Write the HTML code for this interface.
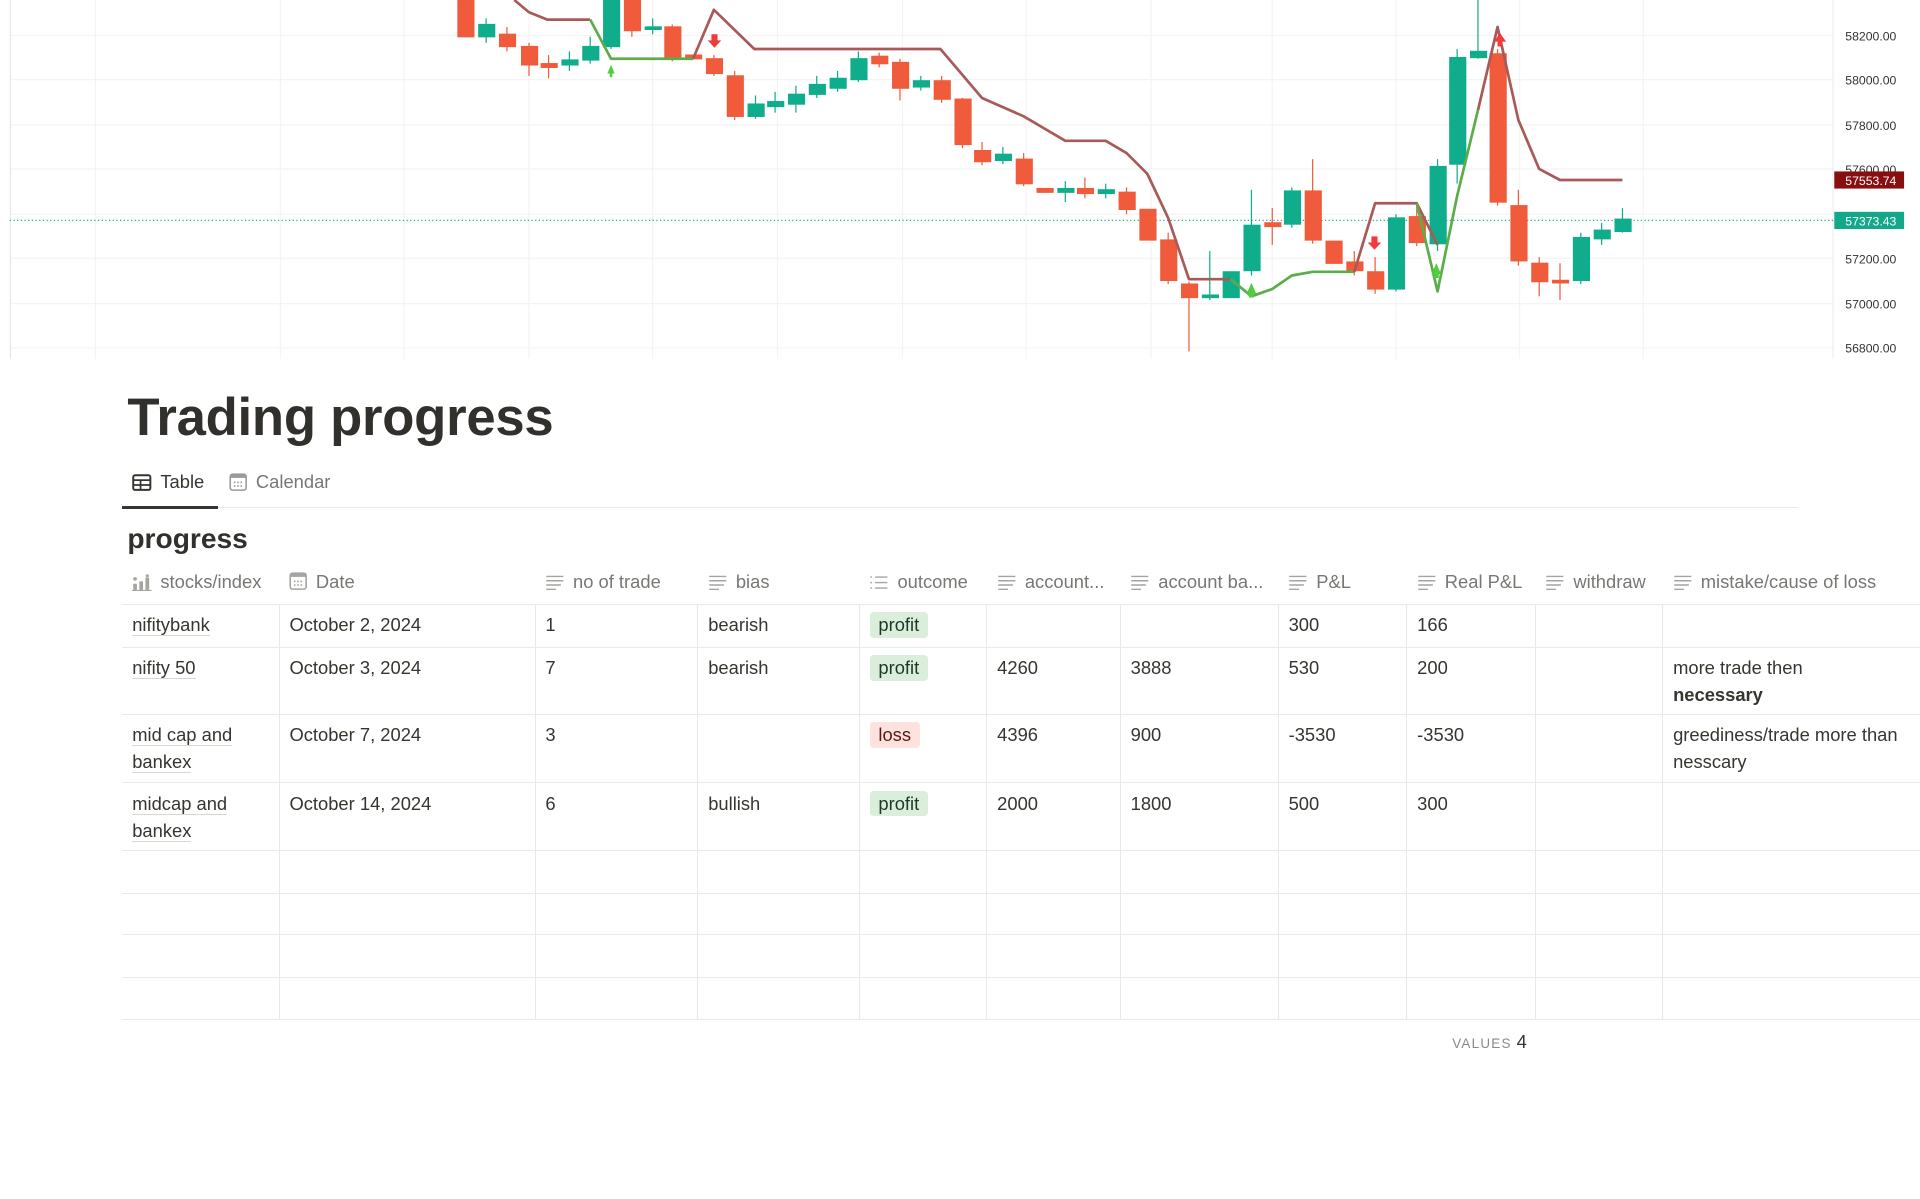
<!DOCTYPE html>
<html><head><meta charset="utf-8">
<style>
html,body{margin:0;padding:0;background:#fff;width:1920px;height:1199px;overflow:hidden}
#w{width:1568px;height:980px;zoom:1.22449;position:relative;font-family:"Liberation Sans",sans-serif;color:#37352f}
.abs{position:absolute}
h1{position:absolute;left:104px;top:316px;margin:0;font-size:43px;font-weight:700;color:#32302c;letter-spacing:-0.2px}
.tab{position:absolute;top:385px;font-size:15px;display:flex;align-items:center;gap:7px}
.h2{position:absolute;left:104px;top:427px;font-size:23px;font-weight:700;color:#32302c}
table{position:absolute;left:100px;top:458px;border-collapse:collapse;table-layout:fixed;font-size:15px}
td,th{padding:0 8px;vertical-align:top;overflow:hidden;white-space:nowrap}
th{font-weight:400;color:#787774;height:35px;vertical-align:middle;text-align:left;border-bottom:1px solid #e9e9e7}
th svg{display:inline-block;vertical-align:-2px;margin-right:7px}
td{border:1px solid #e9e9e7;padding-top:6px;line-height:22px;white-space:normal}
td:first-child{border-left:none}
td.n{font-weight:500}
td.n u{text-decoration:none;border-bottom:1px solid #d8d7d4}
.tag{display:inline-block;padding:0 7px;border-radius:3px;line-height:21px}
.p{background:#dbeddb;color:#1c3829}.l{background:#ffe2dd;color:#5d1715}
</style></head><body><div id="w">
<svg style="display:none"><symbol id="ln" viewBox="0 0 16 14"><g stroke="#a5a4a1" stroke-width="1.2"><line x1="1" y1="2" x2="15" y2="2"/><line x1="1" y1="5.5" x2="15" y2="5.5"/><line x1="1" y1="9" x2="13" y2="9"/><line x1="1" y1="12.5" x2="9" y2="12.5"/></g></symbol>
<symbol id="ls" viewBox="0 0 16 14"><g stroke="#a5a4a1" stroke-width="1.2"><line x1="1" y1="2.5" x2="2.5" y2="2.5"/><line x1="5" y1="2.5" x2="15" y2="2.5"/><line x1="1" y1="7" x2="2.5" y2="7"/><line x1="5" y1="7" x2="15" y2="7"/><line x1="1" y1="11.5" x2="2.5" y2="11.5"/><line x1="5" y1="11.5" x2="15" y2="11.5"/></g></symbol></svg>
<svg class="abs" style="left:0;top:0" width="1568" height="293">
<g stroke="#f4f4f4" stroke-width="1">
<line x1="8" y1="29" x2="1498" y2="29"/><line x1="8" y1="65" x2="1498" y2="65"/><line x1="8" y1="102" x2="1498" y2="102"/><line x1="8" y1="138" x2="1498" y2="138"/><line x1="8" y1="175" x2="1498" y2="175"/><line x1="8" y1="211" x2="1498" y2="211"/><line x1="8" y1="248" x2="1498" y2="248"/><line x1="8" y1="284" x2="1498" y2="284"/>
<line x1="78" y1="0" x2="78" y2="293"/><line x1="229" y1="0" x2="229" y2="293"/><line x1="330" y1="0" x2="330" y2="293"/><line x1="432" y1="0" x2="432" y2="293"/><line x1="533" y1="0" x2="533" y2="293"/><line x1="635" y1="0" x2="635" y2="293"/><line x1="737" y1="0" x2="737" y2="293"/><line x1="838" y1="0" x2="838" y2="293"/><line x1="940" y1="0" x2="940" y2="293"/><line x1="1039" y1="0" x2="1039" y2="293"/><line x1="1140" y1="0" x2="1140" y2="293"/><line x1="1241" y1="0" x2="1241" y2="293"/><line x1="1342" y1="0" x2="1342" y2="293"/>
<line x1="8.5" y1="0" x2="8.5" y2="293" stroke="#e8e8e8"/><line x1="1497" y1="0" x2="1497" y2="293" stroke="#eeeeee"/>
</g>
<line x1="8" y1="180" x2="1498" y2="180" stroke="#22ab94" stroke-width="1" stroke-dasharray="1,2"/>
<g stroke-width="1">
<g fill="#ef5b3b" stroke="#ef5b3b">
<line x1="414" y1="22" x2="414" y2="42"/><line x1="432" y1="35" x2="432" y2="62"/><line x1="448" y1="45" x2="448" y2="64"/><line x1="516" y1="0" x2="516" y2="30"/><line x1="549" y1="20" x2="549" y2="50"/><line x1="583" y1="45" x2="583" y2="62"/><line x1="600" y1="58" x2="600" y2="98"/><line x1="718" y1="43" x2="718" y2="55"/><line x1="735" y1="48" x2="735" y2="82"/><line x1="769" y1="62" x2="769" y2="84"/><line x1="786" y1="80" x2="786" y2="121"/><line x1="802" y1="116" x2="802" y2="135"/><line x1="836" y1="125" x2="836" y2="152"/><line x1="886" y1="145" x2="886" y2="162"/><line x1="920" y1="153" x2="920" y2="175"/><line x1="954" y1="190" x2="954" y2="232"/><line x1="971" y1="230" x2="971" y2="287"/><line x1="1039" y1="170" x2="1039" y2="200"/><line x1="1072" y1="130" x2="1072" y2="199"/><line x1="1106" y1="205" x2="1106" y2="225"/><line x1="1123" y1="210" x2="1123" y2="240"/><line x1="1157" y1="165" x2="1157" y2="201"/><line x1="1223" y1="40" x2="1223" y2="168"/><line x1="1240" y1="155" x2="1240" y2="217"/><line x1="1257" y1="210" x2="1257" y2="242"/><line x1="1274" y1="215" x2="1274" y2="245"/>
<rect x="374" y="0" width="13" height="30"/><rect x="408" y="28" width="13" height="10"/><rect x="426" y="38" width="13" height="15"/><rect x="442" y="52" width="13" height="3"/><rect x="510" y="0" width="13" height="25"/><rect x="543" y="22" width="13" height="26"/><rect x="560" y="45" width="13" height="3"/><rect x="577" y="48" width="13" height="12"/><rect x="594" y="62" width="13" height="33"/><rect x="712" y="46" width="13" height="6"/><rect x="729" y="51" width="13" height="21"/><rect x="763" y="66" width="13" height="15"/><rect x="780" y="81" width="13" height="37"/><rect x="796" y="123" width="13" height="9"/><rect x="830" y="130" width="13" height="20"/><rect x="847" y="154" width="13" height="3"/><rect x="880" y="154" width="13" height="4"/><rect x="914" y="157" width="13" height="14"/><rect x="931" y="171" width="13" height="25"/><rect x="948" y="196" width="13" height="33"/><rect x="965" y="232" width="13" height="11"/><rect x="1033" y="182" width="13" height="3"/><rect x="1066" y="156" width="13" height="40"/><rect x="1083" y="197" width="13" height="18"/><rect x="1100" y="214" width="13" height="7"/><rect x="1117" y="222" width="13" height="14"/><rect x="1151" y="177" width="13" height="21"/><rect x="1217" y="44" width="13" height="121"/><rect x="1234" y="168" width="13" height="45"/><rect x="1251" y="215" width="13" height="15"/><rect x="1268" y="229" width="13" height="2"/>
</g>
<g fill="#0fad8b" stroke="#0fad8b">
<line x1="397" y1="15" x2="397" y2="35"/><line x1="465" y1="42" x2="465" y2="58"/><line x1="482" y1="30" x2="482" y2="52"/><line x1="499" y1="0" x2="499" y2="40"/><line x1="533" y1="15" x2="533" y2="28"/><line x1="617" y1="78" x2="617" y2="97"/><line x1="633" y1="75" x2="633" y2="92"/><line x1="650" y1="70" x2="650" y2="92"/><line x1="667" y1="62" x2="667" y2="80"/><line x1="684" y1="58" x2="684" y2="75"/><line x1="701" y1="42" x2="701" y2="67"/><line x1="752" y1="62" x2="752" y2="74"/><line x1="819" y1="120" x2="819" y2="134"/><line x1="870" y1="148" x2="870" y2="165"/><line x1="903" y1="150" x2="903" y2="162"/><line x1="988" y1="205" x2="988" y2="245"/><line x1="1022" y1="155" x2="1022" y2="225"/><line x1="1055" y1="153" x2="1055" y2="186"/><line x1="1140" y1="175" x2="1140" y2="238"/><line x1="1174" y1="130" x2="1174" y2="205"/><line x1="1190" y1="40" x2="1190" y2="150"/><line x1="1207" y1="0" x2="1207" y2="48"/><line x1="1291" y1="190" x2="1291" y2="232"/><line x1="1308" y1="182" x2="1308" y2="200"/><line x1="1325" y1="170" x2="1325" y2="190"/>
<rect x="391" y="20" width="13" height="10"/><rect x="459" y="49" width="13" height="4"/><rect x="476" y="38" width="13" height="11"/><rect x="493" y="0" width="13" height="38"/><rect x="527" y="22" width="13" height="2"/><rect x="611" y="85" width="13" height="10"/><rect x="627" y="83" width="13" height="4"/><rect x="644" y="77" width="13" height="8"/><rect x="661" y="69" width="13" height="8"/><rect x="678" y="64" width="13" height="8"/><rect x="695" y="48" width="13" height="17"/><rect x="746" y="66" width="13" height="5"/><rect x="813" y="126" width="13" height="5"/><rect x="864" y="154" width="13" height="3"/><rect x="897" y="155" width="13" height="3"/><rect x="982" y="241" width="13" height="2"/><rect x="999" y="222" width="13" height="21"/><rect x="1016" y="184" width="13" height="37"/><rect x="1049" y="156" width="13" height="27"/><rect x="1134" y="178" width="13" height="58"/><rect x="1168" y="136" width="13" height="63"/><rect x="1184" y="47" width="13" height="87"/><rect x="1201" y="42" width="13" height="5"/><rect x="1285" y="194" width="13" height="35"/><rect x="1302" y="188" width="13" height="7"/><rect x="1319" y="179" width="13" height="10"/>
</g></g>
<g fill="none" stroke-width="2.2" stroke-linejoin="round">
<polyline stroke="#a85a58" points="420,0 432,10 447,16 482,16"/>
<polyline stroke="#5cad4a" points="482,16 499,48 566,48"/>
<polyline stroke="#a85a58" points="566,48 583,8 616,40 768,40 802,80 836,95 870,115 903,115 920,125 937,142 954,178 971,228 1005,228"/>
<polyline stroke="#5cad4a" points="1005,228 1022,242 1039,236 1055,225 1072,222 1106,222"/>
<polyline stroke="#a85a58" points="1106,222 1123,166 1157,166 1174,200"/>
<polyline stroke="#5cad4a" points="1157,166 1174,238 1190,160 1207,90"/>
<polyline stroke="#a85a58" points="1207,90 1223,22 1240,98 1257,138 1274,147 1325,147"/>
</g>
<g fill="#ef3b3b"><path d="M581,28h5v5h3l-5.5,6l-5.5,-6h3z"/><path d="M1120,193h5v5h3l-5.5,6l-5.5,-6h3z"/><path d="M1220,34l5,-7l5,7h-3v4h-4v-4z"/></g>
<g fill="#4ccf3c"><path d="M496,60l3,-7l3,7h-2v3h-2v-3z"/><path d="M1018,240l4,-9l4,9h-2v3h-4v-3z"/><path d="M1169,224l4,-9l4,9h-2v3h-4v-3z"/></g>
<g font-family="Liberation Sans,sans-serif" font-size="10" fill="#333">
<text x="1507" y="33">58200.00</text><text x="1507" y="69">58000.00</text><text x="1507" y="106">57800.00</text><text x="1507" y="142">57600.00</text><text x="1507" y="215">57200.00</text><text x="1507" y="252">57000.00</text><text x="1507" y="288">56800.00</text>
</g>
<rect x="1498" y="140" width="57" height="14" fill="#880e10"/><text x="1507" y="151" font-family="Liberation Sans,sans-serif" font-size="10" fill="#fff">57553.74</text>
<rect x="1498" y="173" width="57" height="14" fill="#12a889"/><text x="1507" y="184" font-family="Liberation Sans,sans-serif" font-size="10" fill="#fff">57373.43</text>
</svg>

<h1>Trading progress</h1>
<div class="tab" style="left:108px;color:#37352f"><svg width="16" height="14" viewBox="0 0 16 14"><rect x="1" y="1" width="14" height="12" rx="1.5" fill="none" stroke="#37352f" stroke-width="1.6"/><line x1="1" y1="5" x2="15" y2="5" stroke="#37352f" stroke-width="1.4"/><line x1="1" y1="9" x2="15" y2="9" stroke="#37352f" stroke-width="1.4"/><line x1="7" y1="5" x2="7" y2="13" stroke="#37352f" stroke-width="1.4"/></svg><span style="font-weight:500">Table</span></div>
<div class="tab" style="left:187px;color:#787774"><svg width="15" height="15" viewBox="0 0 15 15"><rect x="1" y="1" width="13" height="13" rx="2" fill="none" stroke="#9b9a97" stroke-width="1.3"/><rect x="1" y="1" width="13" height="3" fill="#9b9a97"/><g fill="#9b9a97"><rect x="4" y="7" width="1.3" height="1.3"/><rect x="6.7" y="7" width="1.3" height="1.3"/><rect x="9.4" y="7" width="1.3" height="1.3"/><rect x="4" y="10" width="1.3" height="1.3"/><rect x="6.7" y="10" width="1.3" height="1.3"/><rect x="9.4" y="10" width="1.3" height="1.3"/></g></svg><span>Calendar</span></div>
<div class="abs" style="left:100px;top:414px;width:1368px;height:1px;background:#e9e9e7"></div>
<div class="abs" style="left:100px;top:413px;width:78px;height:2.5px;background:#37352f"></div>
<div class="h2">progress</div>

<table>
<colgroup><col style="width:128px"><col style="width:209px"><col style="width:133px"><col style="width:132px"><col style="width:104px"><col style="width:109px"><col style="width:129px"><col style="width:105px"><col style="width:105px"><col style="width:104px"><col style="width:210px"></colgroup>
<tr>
<th><svg width="16" height="14" viewBox="0 0 16 14" fill="#a5a4a1"><rect x="1" y="8" width="3" height="5"/><rect x="6" y="6" width="3" height="7"/><rect x="11" y="3" width="3" height="10"/><rect x="0" y="13" width="16" height="1"/><circle cx="2.5" cy="4" r="1.5"/><circle cx="12.5" cy="1.5" r="1.3"/></svg>stocks/index</th>
<th><svg width="15" height="15" viewBox="0 0 15 15"><rect x="1" y="1" width="13" height="13" rx="2" fill="none" stroke="#a5a4a1" stroke-width="1.3"/><rect x="1" y="1" width="13" height="3" fill="#a5a4a1"/><g fill="#a5a4a1"><rect x="4" y="7" width="1.3" height="1.3"/><rect x="6.7" y="7" width="1.3" height="1.3"/><rect x="9.4" y="7" width="1.3" height="1.3"/><rect x="4" y="10" width="1.3" height="1.3"/><rect x="6.7" y="10" width="1.3" height="1.3"/><rect x="9.4" y="10" width="1.3" height="1.3"/></g></svg>Date</th>
<th><svg width="16" height="14"><use href="#ln"/></svg>no of trade</th><th><svg width="16" height="14"><use href="#ln"/></svg>bias</th><th><svg width="16" height="14"><use href="#ls"/></svg>outcome</th><th><svg width="16" height="14"><use href="#ln"/></svg>account...</th><th><svg width="16" height="14"><use href="#ln"/></svg>account ba...</th><th><svg width="16" height="14"><use href="#ln"/></svg>P&amp;L</th><th><svg width="16" height="14"><use href="#ln"/></svg>Real P&amp;L</th><th><svg width="16" height="14"><use href="#ln"/></svg>withdraw</th><th><svg width="16" height="14"><use href="#ln"/></svg>mistake/cause of loss</th>
</tr>
<tr style="height:35px"><td class="n"><u>nifitybank</u></td><td>October 2, 2024</td><td>1</td><td>bearish</td><td><span class="tag p">profit</span></td><td></td><td></td><td>300</td><td>166</td><td></td><td style="border-right:none"></td></tr>
<tr style="height:55px"><td class="n"><u>nifity 50</u></td><td>October 3, 2024</td><td>7</td><td>bearish</td><td><span class="tag p">profit</span></td><td>4260</td><td>3888</td><td>530</td><td>200</td><td></td><td style="border-right:none">more trade then<br><b>necessary</b></td></tr>
<tr style="height:56px"><td class="n"><u>mid cap and</u><br><u>bankex</u></td><td>October 7, 2024</td><td>3</td><td></td><td><span class="tag l">loss</span></td><td>4396</td><td>900</td><td>-3530</td><td>-3530</td><td></td><td style="border-right:none">greediness/trade more than<br>nesscary</td></tr>
<tr style="height:55px"><td class="n"><u>midcap and</u><br><u>bankex</u></td><td>October 14, 2024</td><td>6</td><td>bullish</td><td><span class="tag p">profit</span></td><td>2000</td><td>1800</td><td>500</td><td>300</td><td></td><td style="border-right:none"></td></tr>
<tr style="height:35px"><td></td><td></td><td></td><td></td><td></td><td></td><td></td><td></td><td></td><td></td><td style="border-right:none"></td></tr>
<tr style="height:34px"><td></td><td></td><td></td><td></td><td></td><td></td><td></td><td></td><td></td><td></td><td style="border-right:none"></td></tr>
<tr style="height:35px"><td></td><td></td><td></td><td></td><td></td><td></td><td></td><td></td><td></td><td></td><td style="border-right:none"></td></tr>
<tr style="height:34px"><td></td><td></td><td></td><td></td><td></td><td></td><td></td><td></td><td></td><td></td><td style="border-right:none"></td></tr>
</table>
<div class="abs" style="left:1186px;top:842px;font-size:11px;letter-spacing:1px;color:#8a8986">VALUES <span style="font-size:15px;color:#37352f;letter-spacing:0">4</span></div>
</div></body></html>
